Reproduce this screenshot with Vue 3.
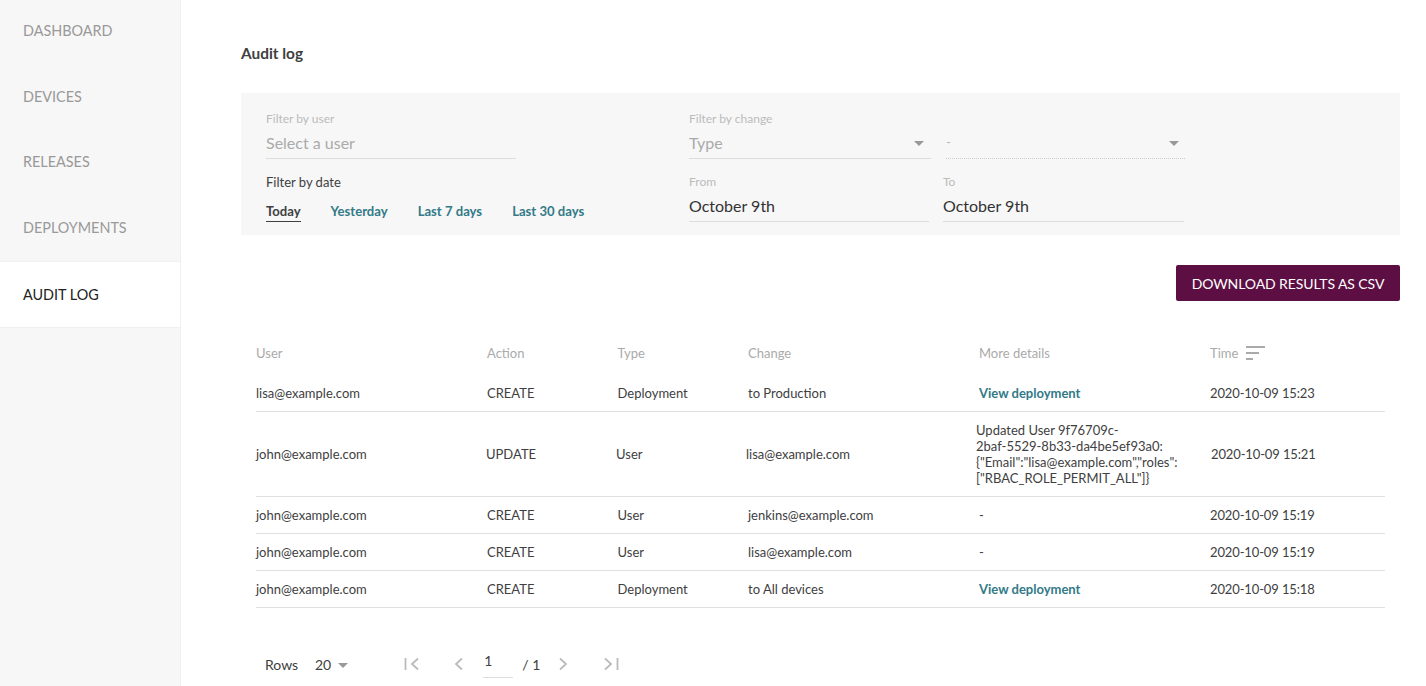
<script setup>
const navItems = [
  { name: 'Dashboard' },
  { name: 'Devices' },
  { name: 'Releases' },
  { name: 'Deployments' },
  { name: 'Audit log', active: true }
];

const tabs = ['Today', 'Yesterday', 'Last 7 days', 'Last 30 days'];

const columns = ['User', 'Action', 'Type', 'Change', 'More details', 'Time'];

const rows = [
  { user: 'lisa@example.com', action: 'CREATE', type: 'Deployment', change: 'to Production', link: 'View deployment', time: '2020-10-09 15:23' },
  { user: 'john@example.com', action: 'UPDATE', type: 'User', change: 'lisa@example.com', details: 'Updated User 9f76709c-\n2baf-5529-8b33-da4be5ef93a0:\n{"Email":"lisa@example.com","roles":\n["RBAC_ROLE_PERMIT_ALL"]}', time: '2020-10-09 15:21', wide: true },
  { user: 'john@example.com', action: 'CREATE', type: 'User', change: 'jenkins@example.com', details: '-', time: '2020-10-09 15:19' },
  { user: 'john@example.com', action: 'CREATE', type: 'User', change: 'lisa@example.com', details: '-', time: '2020-10-09 15:19' },
  { user: 'john@example.com', action: 'CREATE', type: 'Deployment', change: 'to All devices', link: 'View deployment', time: '2020-10-09 15:18' }
];
</script>

<template>
  <div class="layout">
    <nav class="sidebar">
      <a v-for="item in navItems" :key="item.name" class="nav-item" :class="{ active: item.active }">{{ item.name }}</a>
    </nav>

    <main class="content">
      <h3 class="title">Audit log</h3>

      <section class="filters">
        <div class="filter-row first">
          <div class="field user-field">
            <label>Filter by user</label>
            <div class="input placeholder">Select a user</div>
          </div>
          <div class="field type-field">
            <label>Filter by change</label>
            <div class="input placeholder">Type<span class="caret"></span></div>
          </div>
          <div class="field sub-field">
            <div class="input disabled">-<span class="caret"></span></div>
          </div>
        </div>
        <div class="filter-row second">
          <div class="date-field">
            <div class="date-title">Filter by date</div>
            <div class="tabs">
              <a v-for="(t, i) in tabs" :key="t" class="tab" :class="{ current: i === 0 }">{{ t }}</a>
            </div>
          </div>
          <div class="field from-field">
            <label>From</label>
            <div class="input">October 9th</div>
          </div>
          <div class="field to-field">
            <label>To</label>
            <div class="input">October 9th</div>
          </div>
        </div>
      </section>

      <div class="actions">
        <button class="download">Download results as csv</button>
      </div>

      <div class="table">
        <div class="row head">
          <div v-for="c in columns" :key="c" class="cell">
            {{ c }}
            <svg v-if="c === 'Time'" class="sort" width="20" height="14" viewBox="0 0 20 14">
              <path d="M0 1h19M0 7h13M0 13h7" stroke="#aaa" stroke-width="2" fill="none" />
            </svg>
          </div>
        </div>
        <div v-for="(r, i) in rows" :key="i" class="row" :class="{ wide: r.wide }">
          <div class="cell">{{ r.user }}</div>
          <div class="cell">{{ r.action }}</div>
          <div class="cell">{{ r.type }}</div>
          <div class="cell">{{ r.change }}</div>
          <div class="cell details">
            <a v-if="r.link" class="link">{{ r.link }}</a>
            <template v-else>{{ r.details }}</template>
          </div>
          <div class="cell time">{{ r.time }}</div>
        </div>
      </div>

      <div class="pagination">
        <span class="rows-label">Rows</span>
        <span class="rows-value">20</span>
        <span class="caret small"></span>
        <div class="pager">
          <svg class="pg first-pg" width="16" height="14" viewBox="0 0 16 14"><path d="M1.500 1v12M14 1.500 8 7l6 5.500" /></svg>
          <svg class="pg prev-pg" width="10" height="14" viewBox="0 0 10 14"><path d="M8 1.500 2 7l6 5.500" /></svg>
          <span class="page-input">1</span>
          <span class="page-total">/ 1</span>
          <svg class="pg next-pg" width="10" height="14" viewBox="0 0 10 14"><path d="M2 1.500 8 7l-6 5.500" /></svg>
          <svg class="pg last-pg" width="16" height="14" viewBox="0 0 16 14"><path d="M2 1.500 8 7l-6 5.500M14.500 1v12" /></svg>
        </div>
      </div>
    </main>
  </div>
</template>

<style>
html, body {
  margin: 0;
  background: #fff;
}
</style>

<style scoped>
.layout {
  display: flex;
  height: 686px;
  overflow: hidden;
  font-family: Lato, "Open Sans", sans-serif;
  color: #404041;
  font-size: 13px;
}

.sidebar {
  width: 180px;
  flex: none;
  background: #f7f7f7;
  border-right: 1px solid #eef1f0;
}

.nav-item {
  display: flex;
  align-items: center;
  height: 65.800px;
  box-sizing: border-box;
  padding-left: 23px;
  padding-bottom: 5px;
  font-size: 14.400px;
  text-transform: uppercase;
  color: #999;
}

.nav-item.active {
  height: 67px;
  margin-top: -2.200px;
  padding-bottom: 0;
  background: #fff;
  color: #222;
  border-top: 1px solid #eef1f0;
  border-bottom: 1px solid #eef1f0;
}

.content {
  flex: 1;
  min-width: 0;
  padding: 0 26px 0 60px;
}

.title {
  margin: 44px 0 31px;
  font-size: 15.400px;
  line-height: 18px;
  font-weight: 700;
  color: #404041;
}

.filters {
  background: #f7f7f7;
  height: 142px;
  padding: 19px 25px 0;
  box-sizing: border-box;
}

.filter-row {
  display: flex;
}

.filter-row.first {
  height: 48px;
}

.filter-row.second {
  margin-top: 15px;
}

.field label {
  display: block;
  font-size: 12px;
  line-height: 14px;
  color: #bbb;
}

.input {
  position: relative;
  height: 33px;
  line-height: 33px;
  box-sizing: border-box;
  font-size: 16px;
  color: #333;
  border-bottom: 1px solid #ddd;
}

.input.placeholder {
  color: #aaa;
}

.input.disabled {
  color: #bbb;
  border-bottom: 1px dotted #ccc;
  font-size: 13px;
}

.user-field {
  width: 250px;
  margin-right: 173px;
}

.type-field {
  width: 242px;
  margin-right: 15px;
}

.sub-field {
  width: 239px;
  padding-top: 14px;
}

.caret {
  position: absolute;
  right: 7px;
  top: 15px;
  border-left: 5px solid transparent;
  border-right: 5px solid transparent;
  border-top: 5px solid #999;
}

.sub-field .caret {
  right: 6px;
}

.date-field {
  width: 423px;
}

.date-title {
  line-height: 16px;
  margin-top: -1px;
}

.tabs {
  display: flex;
  gap: 30px;
  margin-top: 12px;
}

.tab {
  font-size: 13.100px;
  line-height: 18px;
  font-weight: 700;
  color: #337a87;
  padding-bottom: 1px;
}

.tab.current {
  color: #404041;
  border-bottom: 1px solid #404041;
}

.from-field {
  width: 240px;
  margin-right: 14px;
}

.to-field {
  width: 241px;
}

.actions {
  display: flex;
  justify-content: flex-end;
  margin-top: 30px;
}

.download {
  height: 36px;
  width: 224px;
  border: 0;
  border-radius: 2px;
  background: #5d0f43;
  color: #fff;
  font-family: inherit;
  font-size: 14px;
  letter-spacing: -0.090px;
  text-transform: uppercase;
  padding: 0;
}

.table {
  margin: 33px 15px 0;
}

.row {
  display: grid;
  grid-template-columns: 231px 130.500px 130.500px 231px 231px 1fr;
  align-items: center;
  min-height: 36px;
  border-bottom: 1px solid #e0e0e0;
  line-height: 16px;
}

.row.wide {
  grid-template-columns: 230px 130px 130px 231px 234px 1fr;
  height: 85px;
  box-sizing: border-box;
}

.row.head {
  border-bottom: 0;
  color: #aaa;
  height: 37px;
  min-height: 0;
  margin-bottom: 4px;
}

.head .cell {
  display: flex;
  align-items: center;
}

.sort {
  margin-left: 8px;
}

.link {
  font-weight: 700;
  color: #337a87;
}

.time {
  letter-spacing: -0.130px;
}

.wide .details {
  margin-left: -1px;
  white-space: pre-line;
}

.pagination {
  display: flex;
  align-items: center;
  margin: 38px 0 0 24px;
  height: 36px;
}

.rows-label {
  width: 50px;
  font-size: 14px;
}

.rows-value {
  font-size: 14px;
}

.caret.small {
  position: static;
  margin-left: 7px;
  margin-top: 2px;
}

.pager {
  display: flex;
  align-items: center;
  margin-left: 56px;
}

.pg path {
  fill: none;
  stroke: #bbb;
  stroke-width: 1.800;
}

.prev-pg {
  margin-left: 34px;
}

.page-input {
  width: 30px;
  height: 28px;
  line-height: 22px;
  margin-left: 19px;
  font-size: 14px;
  box-sizing: border-box;
  padding-left: 1px;
  border-bottom: 1px solid #ddd;
}

.page-total {
  margin-left: 9px;
  font-size: 14px;
}

.next-pg {
  margin-left: 18px;
}

.last-pg {
  margin-left: 35px;
}
</style>
